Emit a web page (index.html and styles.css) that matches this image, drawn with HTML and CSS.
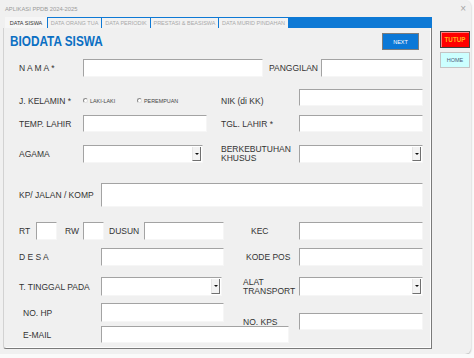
FILE: index.html
```html
<!DOCTYPE html>
<html>
<head>
    <meta charset="utf-8">
    <title>APLIKASI PPDB 2024-2025</title>
    <link rel="stylesheet" href="styles.css">
</head>
<body>
    <div class="window">
        <div class="titlebar">
            <span class="title">APLIKASI PPDB 2024-2025</span>
            <span class="close">&times;</span>
        </div>
        <div class="main">
            <div class="multipage">
                <div class="tabs">
                    <div class="tab active t1">DATA SISWA</div>
                    <div class="tab t2">DATA ORANG TUA</div>
                    <div class="tab t3">DATA PERIODIK</div>
                    <div class="tab t4">PRESTASI &amp; BEASISWA</div>
                    <div class="tab t5">DATA MURID PINDAHAN</div>
                </div>
                <div class="page">
                    <div class="head">
                        <h1>BIODATA SISWA</h1>
                        <button class="btn-next">NEXT</button>
                    </div>

                    <div class="row r-nama">
                        <label class="lbl">N A M A *</label>
                        <input class="txt f-nama" type="text">
                        <label class="lbl lbl-panggil">PANGGILAN</label>
                        <input class="txt f-panggil" type="text">
                    </div>

                    <div class="row upper r-jk">
                        <div class="left">
                            <label class="lbl">J. KELAMIN *</label>
                            <span class="radio r-laki"><i></i>LAKI-LAKI</span>
                            <span class="radio"><i></i>PEREMPUAN</span>
                        </div>
                        <div class="right">
                            <label class="lbl">NIK (di KK)</label>
                            <input class="txt f-right" type="text">
                        </div>
                    </div>

                    <div class="row upper r-lahir">
                        <div class="left">
                            <label class="lbl">TEMP. LAHIR</label>
                            <input class="txt f-temp" type="text">
                        </div>
                        <div class="right">
                            <label class="lbl">TGL. LAHIR *</label>
                            <input class="txt f-right" type="text">
                        </div>
                    </div>

                    <div class="row upper r-agama">
                        <div class="left">
                            <label class="lbl">AGAMA</label>
                            <div class="combo f-agama"><span class="drop"></span></div>
                        </div>
                        <div class="right">
                            <label class="lbl two">BERKEBUTUHAN<br>KHUSUS</label>
                            <div class="combo f-right"><span class="drop"></span></div>
                        </div>
                    </div>

                    <div class="row r-jalan">
                        <label class="lbl lbl-long">KP/ JALAN / KOMP</label>
                        <input class="txt f-jalan" type="text">
                    </div>

                    <div class="row lower r-rt">
                        <div class="left">
                            <label class="lbl lbl-rt">RT</label>
                            <input class="txt f-small" type="text">
                            <label class="lbl lbl-rw">RW</label>
                            <input class="txt f-small" type="text">
                            <label class="lbl lbl-dusun">DUSUN</label>
                            <input class="txt f-dusun" type="text">
                        </div>
                        <div class="right">
                            <label class="lbl pad-kec">KEC</label>
                            <input class="txt f-right" type="text">
                        </div>
                    </div>

                    <div class="row lower r-desa">
                        <div class="left">
                            <label class="lbl lbl-long">D E S A</label>
                            <input class="txt f-desa" type="text">
                        </div>
                        <div class="right">
                            <label class="lbl pad-pos">KODE POS</label>
                            <input class="txt f-right" type="text">
                        </div>
                    </div>

                    <div class="row lower r-tinggal">
                        <div class="left">
                            <label class="lbl lbl-long">T. TINGGAL PADA</label>
                            <div class="combo f-tinggal"><span class="drop"></span></div>
                        </div>
                        <div class="right">
                            <label class="lbl two">ALAT<br>TRANSPORT</label>
                            <div class="combo f-right"><span class="drop"></span></div>
                        </div>
                    </div>

                    <div class="row lower r-hp">
                        <div class="left">
                            <label class="lbl lbl-long indent">NO. HP</label>
                            <input class="txt f-desa" type="text">
                        </div>
                        <div class="right r-kps">
                            <label class="lbl">NO. KPS</label>
                            <input class="txt f-right" type="text">
                        </div>
                    </div>

                    <div class="row r-email">
                        <label class="lbl lbl-long indent">E-MAIL</label>
                        <input class="txt f-email" type="text">
                    </div>
                </div>
            </div>

            <div class="side">
                <button class="btn-tutup">TUTUP</button>
                <button class="btn-home">HOME</button>
            </div>
        </div>
    </div>
</body>
</html>
```

FILE: styles.css
```css
* {
    box-sizing: border-box;
    margin: 0;
    padding: 0;
}

body {
    font-family: "Liberation Sans", Arial, sans-serif;
    background: #fafafa;
    color: #333;
}

.window {
    width: 471px;
    height: 354px;
    background: #f0f0f0;
    border-radius: 0 6px 6px 0;
    box-shadow: 0 1px 2px rgba(0, 0, 0, 0.3);
}

.titlebar {
    height: 17px;
    display: flex;
    align-items: center;
    justify-content: space-between;
    padding: 0 5px 0 5px;
}

.title {
    font-size: 5.8px;
    color: #9a9a9a;
}

.close {
    font-size: 10px;
    color: #a5a5a5;
}

.main {
    display: flex;
}

/* multipage */
.multipage {
    width: 429px;
    margin-left: 3px;
}

.tabs {
    display: flex;
    gap: 1px;
    height: 11px;
    margin-left: 2px;
    background: #0e79d5;
}

.tab {
    height: 10px;
    margin-top: 1px;
    background: #f2f2f2;
    color: #a9a9a9;
    font-size: 5.5px;
    display: flex;
    align-items: center;
    justify-content: center;
}

.tab.active {
    height: 11px;
    margin-top: 0;
    background: #f6f6f6;
    color: #333;
}

.t1 { width: 42px; }
.t2 { width: 53px; }
.t3 { width: 48px; }
.t4 { width: 67px; }
.t5 { width: 69px; }

.page {
    height: 321px;
    padding-top: 5px;
    border-left: 1px solid #d2d2d2;
    border-right: 1px solid #7a7a7a;
    border-bottom: 1px solid #7a7a7a;
    border-bottom-left-radius: 3px;
    box-shadow: inset -1px -1px 0 #fdfdfd;
}

.head {
    display: flex;
    align-items: flex-start;
    height: 17px;
    padding-left: 6px;
}

h1 {
    font-size: 15.5px;
    line-height: 15px;
    color: #0b6fc3;
    transform: scaleX(0.76);
    transform-origin: left top;
    white-space: nowrap;
}

.btn-next {
    margin-left: auto;
    margin-right: 12px;
    width: 37px;
    height: 17px;
    background: #0b78d7;
    border: 1px solid #7c7c7c;
    color: #fff;
    font-family: "Liberation Sans", Arial, sans-serif;
    font-size: 5.5px;
}

/* rows */
.row {
    display: flex;
    align-items: center;
    padding-left: 15px;
}

.row .left,
.row .right {
    display: flex;
    align-items: center;
}

.upper .left { width: 202px; }
.upper .right .lbl { width: 78px; }
.lower .left { width: 224px; }
.lower .right .lbl { width: 56px; }

.lbl {
    flex: none;
    width: 64px;
    font-size: 8.5px;
    white-space: nowrap;
}

.lbl.two { line-height: 9px; }
.lbl-long { width: 82px; }
.lbl-panggil { width: 52px; margin-left: 6px; }
.lbl-rt { width: 17px; }
.lbl-rw { width: 18px; margin-left: 8px; }
.lbl-dusun { width: 35px; margin-left: 5px; }
.indent { padding-left: 4px; }
.pad-kec { padding-left: 8px; }
.pad-pos { padding-left: 3px; }

.txt,
.combo {
    flex: none;
    height: 18px;
    background: #fff;
    border: 1px solid;
    border-color: #a3a3a3 #f6f6f6 #f6f6f6 #a3a3a3;
    outline: none;
}

.combo {
    display: flex;
    justify-content: flex-end;
    padding: 1px;
}

.drop {
    width: 9px;
    background: #f3f3f3;
    border-left: 1px solid #e6e6e6;
    border-right: 1px solid #707070;
    border-bottom: 1px solid #707070;
    display: flex;
    align-items: center;
    justify-content: center;
}

.drop::after {
    content: "";
    border-left: 2px solid transparent;
    border-right: 2px solid transparent;
    border-top: 2px solid #111;
}

.radio {
    display: flex;
    align-items: center;
    gap: 2px;
    font-size: 5.4px;
    color: #444;
}

.radio i {
    width: 5px;
    height: 5px;
    border-radius: 50%;
    border: 1px solid #8a8a8a;
    border-right-color: #e0e0e0;
    border-bottom-color: #e0e0e0;
    background: #fff;
}

.r-laki { width: 54px; }

/* vertical rhythm */
.r-nama { margin-top: 9px; height: 18px; }
.r-jk { margin-top: 12px; height: 17px; }
.r-jk .left,
.r-jk .right .lbl { padding-top: 6px; }
.r-jk .txt { height: 17px; }
.r-lahir { margin-top: 9px; height: 17px; }
.r-lahir .txt { height: 17px; }
.r-agama { margin-top: 13px; height: 18px; }
.r-jalan { margin-top: 20px; height: 24px; }
.r-jalan .txt { height: 24px; }
.r-rt { margin-top: 15px; height: 18px; }
.r-desa { margin-top: 8px; height: 18px; }
.r-tinggal { margin-top: 11px; height: 19px; }
.r-tinggal .combo { height: 19px; }
.r-hp { margin-top: 7px; height: 19px; align-items: flex-start; }
.r-hp .left .txt { height: 19px; }
.r-kps { margin-top: 10px; align-items: flex-start; }
.r-kps .lbl { line-height: 10px; padding-top: 1px; }
.r-kps .txt { height: 17px; }
.r-email { margin-top: 4px; height: 17px; }
.r-email .txt { height: 17px; }

/* widths */
.f-nama { width: 180px; }
.f-panggil { width: 102px; }
.f-right { width: 124px; }
.f-temp { width: 124px; }
.f-agama { width: 120px; }
.f-jalan { width: 322px; }
.f-small { width: 21px; }
.f-dusun { width: 80px; }
.f-desa { width: 123px; }
.f-tinggal { width: 121px; }
.f-email { width: 188px; }

/* side buttons */
.side {
    display: flex;
    flex-direction: column;
    gap: 4px;
    margin-left: 8px;
    padding-top: 14px;
}

.side button {
    width: 30px;
    font-family: "Liberation Sans", Arial, sans-serif;
}

.btn-tutup {
    height: 17px;
    background: #ff0000;
    border: 1px solid #3e3e3e;
    box-shadow: inset 1px 1px 0 #ff8080;
    color: #ffb21a;
    font-size: 6.3px;
    font-weight: bold;
}

.btn-home {
    height: 16px;
    background: #ccffff;
    border: 1px solid #c4c4c4;
    color: #4c5d7c;
    font-size: 5.5px;
}
```
